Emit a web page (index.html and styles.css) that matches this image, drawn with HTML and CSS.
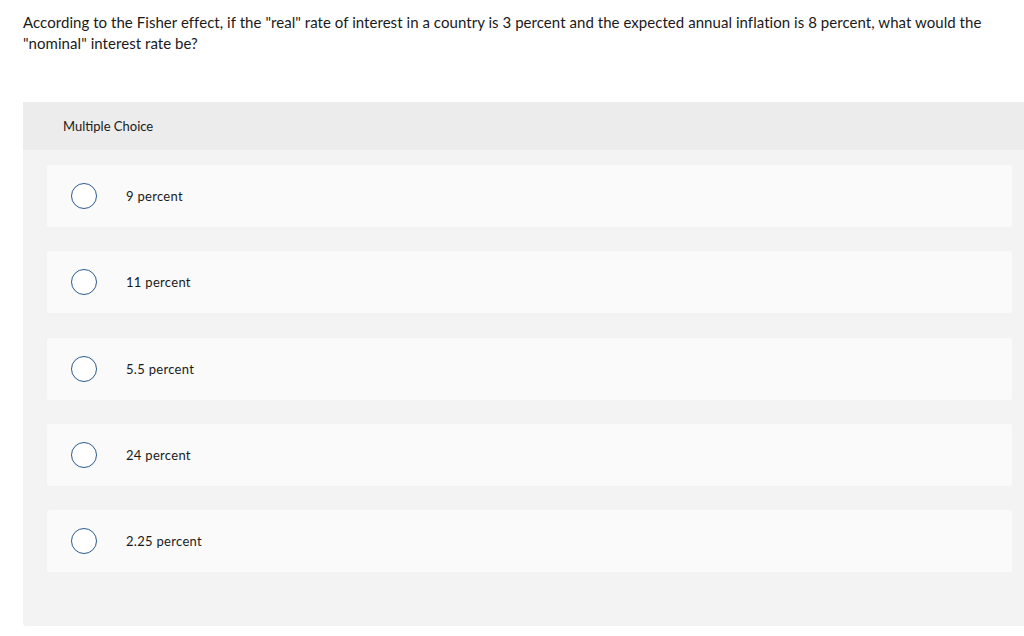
FILE: index.html
```html
<!DOCTYPE html>
<html>
<head>
<meta charset="utf-8">
<link rel="stylesheet" href="styles.css">
</head>
<body>
<div class="page">
  <p class="question">According to the Fisher effect, if the "real" rate of interest in a country is 3 percent and the expected annual inflation is 8 percent, what would the "nominal" interest rate be?</p>
  <div class="panel">
    <div class="panel-head">Multiple Choice</div>
    <div class="panel-body">
      <div class="option"><span class="radio"></span><span class="label">9 percent</span></div>
      <div class="option"><span class="radio"></span><span class="label">11 percent</span></div>
      <div class="option"><span class="radio"></span><span class="label">5.5 percent</span></div>
      <div class="option"><span class="radio"></span><span class="label">24 percent</span></div>
      <div class="option"><span class="radio"></span><span class="label">2.25 percent</span></div>
    </div>
  </div>
</div>
</body>
</html>
```

FILE: styles.css
```css
html, body {
  margin: 0;
  padding: 0;
  background: #ffffff;
  overflow: hidden;
}
body {
  font-family: Lato, "Open Sans", "Liberation Sans", sans-serif;
  color: #222222;
}
.page {
  padding: 12px 0 0 23px;
  width: 1013px;
}
.question {
  margin: 0;
  font-size: 15px;
  line-height: 21px;
  letter-spacing: 0.05px;
  width: 985px;
  color: #1a1a1a;
}
.panel {
  margin-top: 48px;
  width: 1013px;
  border-radius: 0 0 0 3px;
  overflow: hidden;
}
.panel-head {
  background: #ececec;
  height: 48px;
  display: flex;
  align-items: center;
  padding-left: 40px;
  font-size: 13px;
  color: #1a1a1a;
}
.panel-body {
  background: #f3f3f3;
  padding: 15px 24px 54px 24px;
  display: flex;
  flex-direction: column;
  gap: 24.3px;
}
.option {
  background: #fafafa;
  border-radius: 3px;
  height: 62px;
  display: flex;
  align-items: center;
  padding-left: 24px;
}
.radio {
  width: 26px;
  height: 26px;
  border: 1px solid #2b5a8e;
  border-radius: 50%;
  background: #ffffff;
  box-sizing: border-box;
  flex: none;
}
.label {
  margin-left: 29px;
  font-size: 13px;
  letter-spacing: 0.3px;
  color: #1a1a1a;
}
```
